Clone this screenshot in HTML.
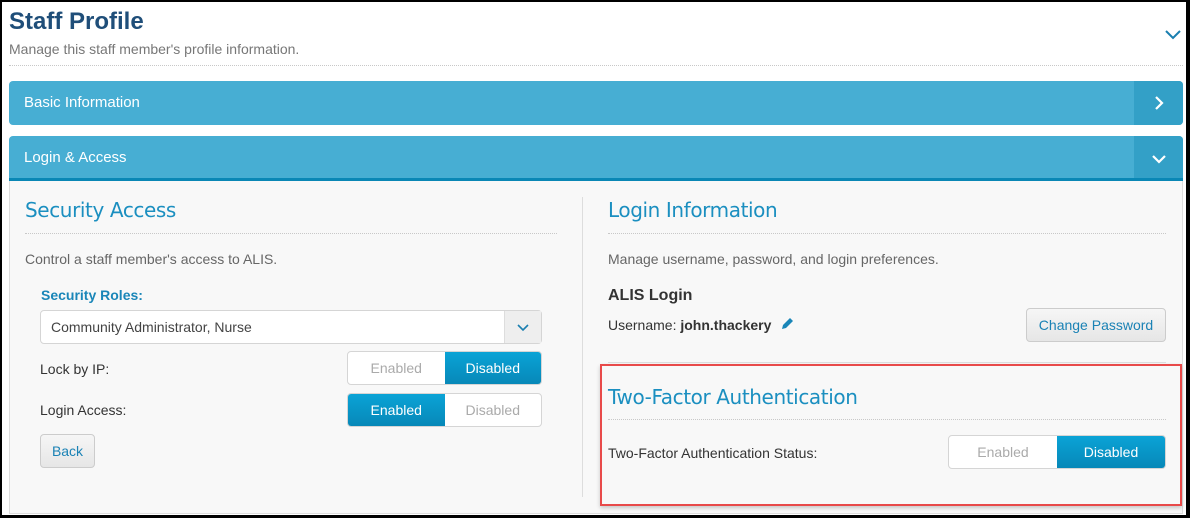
<!DOCTYPE html>
<html><head><style>
*{box-sizing:border-box;margin:0;padding:0}
body{width:1190px;height:518px;background:#000;font-family:"Liberation Sans",Arial,sans-serif;position:relative;overflow:hidden}
.pg{position:absolute;left:2px;top:2px;width:1184px;height:513px;background:#fff}
.a{position:absolute}
.bar{position:absolute;left:7px;width:1174px;height:44px;background:#47aed3;border-radius:4px;color:#fff;font-size:14px;line-height:44px;padding-left:15px}
.bar .tg{position:absolute;right:0;top:0;width:49px;height:100%;background:#33a0c7;border-radius:0 4px 4px 0}
.h{color:#1b8fc0;font-size:20px;font-family:"DejaVu Sans","Liberation Sans",sans-serif;font-weight:normal;letter-spacing:-0.4px}
.dot{border-top:1px dotted #c8c8c8;position:absolute;height:0}
.t{font-size:14px;color:#333}
.g{font-size:14px;color:#666}
.tog{position:absolute;height:34px;border:1px solid #d5d5d5;border-radius:4px;display:flex;overflow:hidden;background:#fff}
.tog span{flex:1;text-align:center;line-height:32px;font-size:14px;color:#aaa}
.tog .on{background:linear-gradient(#0aa3d6,#0788b8);color:#fff}
.btn{position:absolute;border:1px solid #ccc;border-radius:4px;background:linear-gradient(#f6f6f6,#e6e6e6);color:#1a82b5;font-size:14px;text-align:center}
</style></head><body>
<div class="pg">
<div class="a" style="left:7px;top:6px;font-size:24px;font-weight:bold;color:#1f4e79">Staff Profile</div>
<div class="a" style="left:7px;top:39px;font-size:14px;color:#777">Manage this staff member's profile information.</div>
<svg class="a" style="left:1163px;top:28px" width="16" height="10"><path d="M1 1l7 7 7-7" stroke="#1a7fb0" stroke-width="2" fill="none"/></svg>
<div class="dot" style="left:7px;top:63px;width:1174px"></div>
<div class="bar" style="top:79px;font-size:15px">Basic Information<div class="tg"><svg style="position:absolute;left:20px;top:15px" width="10" height="14"><path d="M2 1l6 6-6 6" stroke="#fff" stroke-width="2.2" fill="none"/></svg></div></div>
<div class="bar" style="top:134px;border-radius:4px 4px 0 0;border-bottom:3px solid #0a87b5;height:45px;font-size:15px">Login &amp; Access<div class="tg" style="border-radius:0 4px 0 0"><svg style="position:absolute;left:18px;top:18px" width="14" height="10"><path d="M1 2l6 6 6-6" stroke="#fff" stroke-width="2.2" fill="none"/></svg></div></div>
<div class="a" style="left:7px;top:179px;width:1174px;height:333px;background:#f8f8f8;border:1px solid #ddd;border-top:none"></div>
<div class="a" style="left:580px;top:195px;width:1px;height:300px;background:#ddd"></div>
<div class="a h" style="left:23px;top:196px">Security Access</div>
<div class="dot" style="left:23px;top:231px;width:532px"></div>
<div class="a g" style="left:23px;top:249px">Control a staff member's access to ALIS.</div>
<div class="a" style="left:39px;top:285px;font-size:14px;font-weight:bold;color:#1a86b8">Security Roles:</div>
<div class="a" style="left:38px;top:308px;width:502px;height:34px;background:#fff;border:1px solid #d5d5d5;border-radius:4px;font-size:14px;color:#444;line-height:32px;padding-left:10px">Community Administrator, Nurse<div style="position:absolute;right:0;top:0;width:37px;height:32px;background:#eee;border-left:1px solid #ddd"><svg style="position:absolute;left:12px;top:13px" width="12" height="8"><path d="M1 1l5 5 5-5" stroke="#1a7fb0" stroke-width="1.6" fill="none"/></svg></div></div>
<div class="a t" style="left:38px;top:359px">Lock by IP:</div>
<div class="tog" style="left:345px;top:349px;width:195px"><span>Enabled</span><span class="on">Disabled</span></div>
<div class="a t" style="left:38px;top:400px">Login Access:</div>
<div class="tog" style="left:345px;top:391px;width:195px"><span class="on">Enabled</span><span>Disabled</span></div>
<div class="btn" style="left:38px;top:432px;width:55px;height:34px;line-height:32px">Back</div>
<div class="a h" style="left:606px;top:196px">Login Information</div>
<div class="dot" style="left:606px;top:231px;width:558px"></div>
<div class="a g" style="left:606px;top:249px">Manage username, password, and login preferences.</div>
<div class="a" style="left:606px;top:285px;font-size:16px;font-weight:bold;color:#333">ALIS Login</div>
<div class="a t" style="left:606px;top:315px">Username: <b>john.thackery</b></div>
<svg class="a" style="left:778px;top:315px" width="14" height="14"><path d="M2 12l1-4 7-7 3 3-7 7z" fill="#1a86b8"/></svg>
<div class="btn" style="left:1024px;top:306px;width:140px;height:34px;line-height:32px">Change Password</div>
<div class="a" style="left:606px;top:360px;width:558px;height:1px;background:#ddd"></div>
<div class="a" style="left:598px;top:362px;width:582px;height:142px;border:2px solid #e84a4a;box-shadow:0 2px 4px rgba(0,0,0,.2)"></div>
<div class="a h" style="left:606px;top:383px">Two-Factor Authentication</div>
<div class="dot" style="left:606px;top:417px;width:558px"></div>
<div class="a t" style="left:606px;top:443px">Two-Factor Authentication Status:</div>
<div class="tog" style="left:946px;top:433px;width:218px"><span>Enabled</span><span class="on">Disabled</span></div>
</div>
</body></html>
